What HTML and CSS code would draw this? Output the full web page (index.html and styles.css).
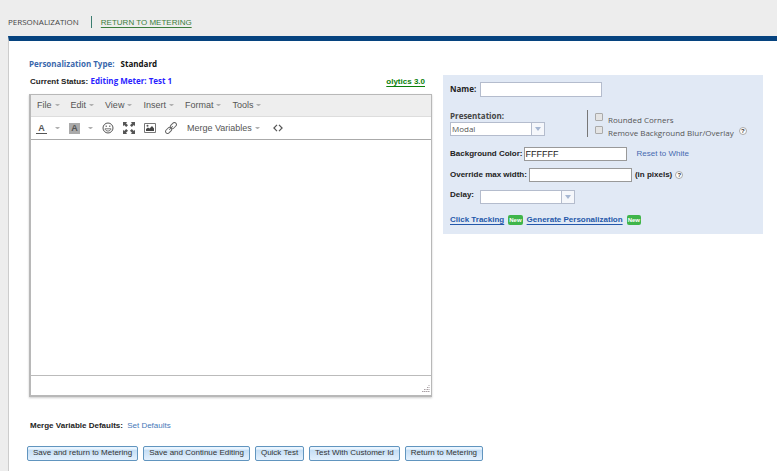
FILE: index.html
```html
<!DOCTYPE html>
<html lang="en">
<head>
<meta charset="utf-8">
<title>Personalization</title>
<link rel="stylesheet" href="styles.css">
</head>
<body>
<nav class="crumbs">
  <span class="crumb">PERSONALIZATION</span>
  <a class="crumb crumb-link" href="#">RETURN TO METERING</a>
</nav>
<main class="panel">
  <section class="editor-column">
    <p class="type"><span class="type-label">Personalization Type:</span> <span>Standard</span></p>
    <div class="status">
      <p><span>Current Status:</span> <span class="status-value">Editing Meter: Test 1</span></p>
      <a class="olytics" href="#">olytics 3.0</a>
    </div>
    <div class="editor">
      <div class="menubar">
        <button class="menu" type="button">File</button>
        <button class="menu" type="button">Edit</button>
        <button class="menu" type="button">View</button>
        <button class="menu" type="button">Insert</button>
        <button class="menu" type="button">Format</button>
        <button class="menu" type="button">Tools</button>
      </div>
      <div class="toolbar">
        <button class="tool" type="button" aria-label="Text color"><span class="letter">A</span></button>
        <button class="tool caret" type="button" aria-label="Text color options"></button>
        <button class="tool" type="button" aria-label="Background color"><span class="letter letter-fill">A</span></button>
        <button class="tool caret" type="button" aria-label="Background color options"></button>
        <button class="tool" type="button" aria-label="Emoticons">
          <svg width="12" height="12" viewBox="0 0 12 12" fill="none" stroke="#555"><circle cx="6" cy="6" r="5"/><path d="M3 6.8c.5 3 5.500 3 6 0z" stroke-width=".8"/><path d="M4.200 3.500v1.500M7.800 3.500v1.500"/></svg>
        </button>
        <button class="tool" type="button" aria-label="Fullscreen">
          <svg width="12" height="12" viewBox="0 0 12 12" fill="#555"><path d="M0 0h4.200L3 1.200l2 2L3.200 5l-2-2L0 4.200zM12 0v4.200L10.800 3l-2 2L7 3.200l2-2L7.800 0zM0 12V7.800L1.200 9l2-2L5 8.800l-2 2L4.200 12zM12 12H7.800L9 10.800l-2-2L8.800 7l2 2L12 7.800z"/></svg>
        </button>
        <button class="tool" type="button" aria-label="Insert image">
          <svg width="12" height="12" viewBox="0 0 12 12"><path d="M.5 1.500h11v9H.5z" fill="#fff" stroke="#777"/><path d="M2 9V7l2-1.500 1.500 1L8 4l2 2.500V9z" fill="#444"/><circle cx="3.500" cy="3.700" r="1" fill="#555"/></svg>
        </button>
        <button class="tool" type="button" aria-label="Insert link">
          <svg width="12" height="12" viewBox="0 0 12 12" fill="none" stroke="#666"><g transform="rotate(-45 6 6)"><rect x="-.8" y="4" width="6.800" height="4" rx="2"/><rect x="6" y="4" width="6.800" height="4" rx="2"/><path d="M3.500 6h5"/></g></svg>
        </button>
        <button class="menu merge" type="button">Merge Variables</button>
        <button class="tool" type="button" aria-label="Source code">
          <svg width="10" height="8" viewBox="0 0 10 8" fill="none" stroke="#555" stroke-width="1.200"><path d="M4 .8L.9 4 4 7.200M6 .8L9.100 4 6 7.200"/></svg>
        </button>
      </div>
      <div class="canvas" contenteditable="true" role="textbox" aria-label="Content"></div>
      <div class="statusbar">
        <svg width="8" height="8" viewBox="0 0 8 8" fill="none" stroke="#a9a0a4"><path d="M0 7.500h8M2 5.500h1.500M4.500 5.500h3M5 3.500h2.500M6.500 1.500h1" stroke-dasharray="1.500 .5"/></svg>
      </div>
    </div>
    <p class="defaults"><span>Merge Variable Defaults:</span> <a href="#">Set Defaults</a></p>
    <div class="actions">
      <button type="button">Save and return to Metering</button>
      <button type="button">Save and Continue Editing</button>
      <button type="button">Quick Test</button>
      <button type="button">Test With Customer Id</button>
      <button type="button">Return to Metering</button>
    </div>
  </section>
  <form class="settings">
    <div class="row row-name">
      <label class="open" for="name">Name:</label>
      <input class="text pale" id="name" type="text">
    </div>
    <div class="row row-presentation">
      <div class="presentation">
        <label class="open" for="presentation">Presentation:</label>
        <span class="select"><select id="presentation"><option>Modal</option></select></span>
      </div>
      <div class="checks">
        <label class="check"><input type="checkbox">Rounded Corners</label>
        <div class="check-line"><label class="check"><input type="checkbox">Remove Background Blur/Overlay</label><button class="help" type="button">?</button></div>
      </div>
    </div>
    <div class="row row-color">
      <label for="color">Background Color:</label>
      <input class="text" id="color" type="text" value="FFFFFF">
      <a class="reset" href="#">Reset to White</a>
    </div>
    <div class="row row-width">
      <label for="width">Override max width:</label>
      <input class="text" id="width" type="text">
      <span>(in pixels)</span>
      <button class="help" type="button">?</button>
    </div>
    <div class="row row-delay">
      <label for="delay">Delay:</label>
      <span class="select"><select id="delay"><option></option></select></span>
    </div>
    <div class="row links">
      <a href="#">Click Tracking</a><span class="new">New</span>
      <a href="#">Generate Personalization</a><span class="new">New</span>
    </div>
  </form>
</main>
</body>
</html>
```

FILE: styles.css
```css
*, *::before, *::after { box-sizing: border-box; }
body {
  margin: 0;
  min-height: 100vh;
  display: flex;
  flex-direction: column;
  background: #ededed;
  color: #222;
  font: 8px/12px "Liberation Sans", Arial, sans-serif;
}
p { margin: 0; }
button, input, select { font: inherit; color: inherit; margin: 0; padding: 0; }
button { border: 0; background: none; }

.crumbs { display: flex; align-items: baseline; padding: 16px 8px 7px; color: #444; }
.crumb { font-family: "Open Sans", sans-serif; line-height: 12px; }
.crumb-link {
  position: relative;
  margin-left: 22px;
  font-family: "Liberation Sans", Arial, sans-serif;
  color: #3b7d3b;
  text-decoration: underline;
  text-underline-offset: 2px;
}
.crumb-link::before {
  content: "";
  position: absolute;
  left: -10px;
  top: -1px;
  height: 12px;
  border-left: 1px solid #3b7d70;
}

.panel {
  flex: 1;
  display: grid;
  grid-template-columns: minmax(0, 403fr) minmax(0, 320fr);
  align-items: start;
  column-gap: 11px;
  margin-left: 8px;
  padding: 17px 14px 8px 20px;
  border-top: 5px solid #06437f;
  border-left: 1px solid #ccc;
  background: #fff;
}
.type, .status-value, .open { font-family: "Open Sans", sans-serif; font-weight: 700; }
.type { color: #111; }
.type-label { margin-right: 4px; color: #3a67ac; }
.status { display: flex; justify-content: space-between; align-items: baseline; margin-top: 5px; padding: 0 7px 0 1px; font-weight: 700; }
.status-value { color: #2b1fff; }
.olytics { color: #087f08; text-underline-offset: 2px; }

.editor {
  margin-top: 6px;
  border: 1px solid #b8b8b8;
  border-left-width: 2px;
  border-bottom-width: 2px;
  box-shadow: 0 1px 2px #ccc;
  color: #555;
}
.menubar { display: flex; gap: 11px; height: 22px; padding-left: 6px; background: #eee; border-bottom: 1px solid #ddd; }
.menu { display: flex; align-items: center; gap: 3px; padding-bottom: 1px; font-size: 9px; line-height: 12px; }
.menu::after, .caret::after { content: ""; width: 5px; border: solid transparent; border-width: 2px 2px 0; border-top-color: #b0b0b0; }
.toolbar { display: flex; align-items: center; gap: 9px; height: 23px; padding-left: 5px; border-bottom: 1px solid #aaa; }
.tool { display: flex; align-items: center; }
.letter { width: 11px; height: 11px; border-bottom: 1px solid #555; font-weight: 700; font-size: 9px; line-height: 10px; }
.letter-fill { background: #aaa; border-color: #aaa; }
.caret { margin: 0 -1px; }
.caret + .tool { margin-left: 1px; }
.merge { margin: 0 4px 0 1px; padding: 0; }
.canvas { height: 235px; outline: 0; }
.statusbar { display: flex; justify-content: flex-end; align-items: flex-end; height: 20px; padding: 0 1px 3px; border-top: 1px solid #bbb; }

.defaults { margin-top: 23px; padding-left: 1px; font-weight: 700; }
.defaults a { margin-left: 2px; font-weight: 400; color: #4679b8; text-decoration: none; }
.actions { display: flex; gap: 5px; margin: 14px 0 0 -2px; white-space: nowrap; }
.actions button {
  height: 15px;
  padding: 0 5px 1px;
  border: 1px solid #6195bf;
  border-radius: 2px;
  background: linear-gradient(#eaf5ff 0 15%, #c5def5 25%, #e3f0fd);
  color: #333;
  line-height: 12px;
}

.settings { margin-top: 17px; padding: 7px 6px 8px 7px; background: #e1e9f5; font-weight: 700; white-space: nowrap; }
.row { display: flex; align-items: center; }
.text { width: 103px; height: 14px; border: 1px solid #999; border-radius: 0; background: #fff; font-size: 9px; font-weight: 400; outline: 0; color: #222; }
.pale { width: 122px; height: 15px; border-color: #b4bccd; }
.row-name { gap: 4px; }
.row-name .open { margin-bottom: 2px; }
.row-presentation { gap: 42px; margin-top: 13px; align-items: flex-start; color: #444; }
.presentation { display: flex; flex-direction: column; }
.select { position: relative; display: block; width: 95px; height: 14px; border: 1px solid #b4bccd; background: #fff; }
.select select { display: block; width: 100%; height: 100%; border: 0; background: none; appearance: none; padding-left: 1px; line-height: 12px; font-family: "Open Sans", sans-serif; font-weight: 400; color: #555; }
.select::before { content: ""; position: absolute; right: 0; top: 0; bottom: 0; width: 13px; border-left: 1px solid #b4bccd; background: #f5f7fb; pointer-events: none; }
.select::after { content: ""; position: absolute; right: 3px; top: 4px; border: solid transparent; border-width: 4px 3px 0; border-top-color: #a6b7d2; pointer-events: none; }
.checks { border-left: 1px solid #777; padding: 1px 0 0 7px; font: 8px/12px "Open Sans", sans-serif; color: #555; }
.check { display: flex; align-items: flex-start; gap: 5px; line-height: 16px; height: 13px; padding-top: 1px; }
.check input { appearance: none; width: 8px; height: 8px; margin-top: 1px; border: 1px solid #aaa; border-radius: 1px; background: #e4e4e4; }
.check-line { display: flex; align-items: center; gap: 5px; }
.help { width: 8px; height: 8px; border: 1px solid #aaa; border-radius: 50%; background: #fff; font: 700 6px/6px "Liberation Sans", sans-serif; color: #333; text-align: center; }
.row-color { margin-top: 10px; gap: 2px; }
.reset { margin-left: 7px; font-weight: 400; color: #4669b0; text-decoration: none; }
.row-width { margin-top: 7px; gap: 3px; }
.row-width .text { margin-left: -1px; }
.row-delay { margin-top: 7px; gap: 6px; }
.row-delay label { margin-bottom: 4px; }
.links { margin-top: 9px; gap: 4px; }
.links a { color: #2458aa; text-underline-offset: 2px; }
.new { padding: 0 1px; border-radius: 2px; background: #3fb54a; color: #fff; font-size: 6px; line-height: 10px; }
```
